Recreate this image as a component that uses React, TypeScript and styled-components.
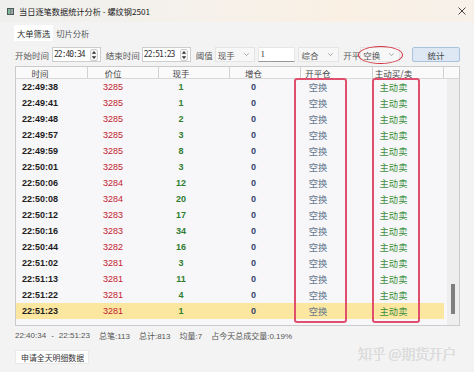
import React from "react";
import styled, { createGlobalStyle } from "styled-components";

const GlobalStyle = createGlobalStyle`
  html, body { margin: 0; padding: 0; }
  body {
    width: 474px; height: 372px; overflow: hidden; background: #f3f3f3;
    font-family: "Liberation Sans", "Noto Sans CJK SC", sans-serif;
  }
  * { box-sizing: border-box; }
`;

const CJK = `"Noto Sans CJK SC", sans-serif`;
const MIXED = `"Liberation Sans", "Noto Sans CJK SC", sans-serif`;

const Window = styled.div`
  position: relative;
  width: 474px;
  height: 372px;
  display: flex;
  flex-direction: column;
  background: #f3f3f3;
`;

const TitleBar = styled.div`
  height: 22px;
  flex: none;
  display: flex;
  align-items: center;
  padding: 0 8px 0 7px;
  background: linear-gradient(90deg, #eff0ee 0%, #f5f1eb 40%, #faf0e4 72%, #f7f1ea 100%);
`;

const TitleText = styled.span`
  margin-left: 5px;
  flex: 1;
  font-family: ${CJK};
  font-size: 8.2px;
  color: #1b1b1b;
  white-space: nowrap;
`;

const Body = styled.div`
  display: flex;
  flex-direction: column;
  padding: 0 14px 0 15px;
`;

const Tabs = styled.div`
  display: flex;
  margin-top: 3px;
  margin-left: -1px;
  height: 16px;
`;

const Tab = styled.div<{ $active?: boolean }>`
  padding: 0 3px;
  line-height: 16px;
  font-family: ${CJK};
  font-size: 8.3px;
  color: ${(p) => (p.$active ? "#2a2a2a" : "#555")};
  background: ${(p) => (p.$active ? "#ffffff" : "transparent")};
`;

const Toolbar = styled.div`
  display: flex;
  align-items: center;
  height: 15px;
  margin-top: 6px;
`;

const Label = styled.span<{ $ml?: number }>`
  margin-left: ${(p) => p.$ml ?? 0}px;
  font-family: ${CJK};
  font-size: 8.5px;
  color: #5a5a5a;
  white-space: nowrap;
`;

const TimeBox = styled.div<{ $ml: number }>`
  margin-left: ${(p) => p.$ml}px;
  width: 49px;
  height: 15px;
  border: 1px solid #cdcdcd;
  background: #fff;
  display: flex;
  align-items: center;
  padding-left: 1px;
`;

const TimeText = styled.span`
  flex: 1;
  font-family: "DejaVu Sans Mono", monospace;
  font-size: 8px;
  letter-spacing: -1px;
  color: #333;
`;

const SelectBox = styled.div<{ $ml: number; $w: number }>`
  position: relative;
  margin-left: ${(p) => p.$ml}px;
  width: ${(p) => p.$w}px;
  height: 15px;
  background: #f7f7f7;
  border: 1px solid #e4e4e4;
  display: flex;
  align-items: center;
  justify-content: space-between;
  padding: 0 5px 0 2px;
  font-family: ${CJK};
  font-size: 8.5px;
  color: #555;
`;

const TextInput = styled.div<{ $ml: number }>`
  margin-left: ${(p) => p.$ml}px;
  width: 38px;
  height: 15px;
  background: #fff;
  border: 1px solid #e6e6e6;
  border-bottom: 1px solid #9a9a9a;
  padding-left: 2px;
  font-family: "Liberation Serif", serif;
  font-size: 9px;
  line-height: 13px;
  color: #444;
`;

const Button = styled.div<{ $ml: number }>`
  margin-left: ${(p) => p.$ml}px;
  width: 48px;
  height: 15px;
  background: #dde8f4;
  border: 1px solid #a9c2dd;
  border-radius: 2px;
  display: flex;
  align-items: center;
  justify-content: center;
  font-family: ${CJK};
  font-size: 8.5px;
  color: #444;
`;

const Ellipse = styled.div`
  position: absolute;
  left: -3px;
  top: -2px;
  width: 45px;
  height: 18px;
  border: 1.5px solid #d4303e;
  border-radius: 50%;
  pointer-events: none;
`;

const Table = styled.div`
  position: relative;
  margin-top: 4px;
  width: 445px;
  height: 260px;
  border: 1px solid #cbcbcb;
  background: #f7f7f9;
  display: flex;
  flex-direction: column;
`;

const HeaderRow = styled.div`
  display: flex;
  height: 12px;
  border-bottom: 1px solid #d9d9d9;
  background: #fafafa;
`;

const HeaderCell = styled.div<{ $w: number }>`
  width: ${(p) => p.$w}px;
  flex: none;
  border-right: 1px solid #d2d2d2;
  display: flex;
  align-items: center;
  font-family: ${CJK};
  font-size: 8.5px;
  color: #444;
`;

const BodyArea = styled.div`
  flex: 1;
  display: flex;
`;

const Rows = styled.div`
  width: 428px;
  display: flex;
  flex-direction: column;
`;

const Row = styled.div<{ $sel?: boolean }>`
  display: flex;
  height: 16px;
  background: ${(p) => (p.$sel ? "#fce7a1" : "transparent")};
`;

const Cell = styled.div<{ $w: number }>`
  width: ${(p) => p.$w}px;
  flex: none;
  display: flex;
  align-items: center;
`;

type Kind = "time" | "price" | "vol" | "oi" | "open" | "side" | "head";

const kindStyle: Record<Kind, string> = {
  time: `font-family: ${MIXED}; font-size: 9px; font-weight: 700; color: #1c1c1c;`,
  price: `font-family: ${MIXED}; font-size: 9px; font-weight: 400; color: #c4202f;`,
  vol: `font-family: ${MIXED}; font-size: 9px; font-weight: 700; color: #2f7d2f;`,
  oi: `font-family: ${MIXED}; font-size: 9px; font-weight: 700; color: #34456a;`,
  open: `font-family: ${CJK}; font-size: 9.3px; color: #65768f;`,
  side: `font-family: ${CJK}; font-size: 9.3px; color: #3e8f3e;`,
  head: ``,
};

const CellText = styled.span<{ $c: number; $k: Kind }>`
  width: ${(p) => p.$c * 2}px;
  display: flex;
  justify-content: center;
  white-space: nowrap;
  ${(p) => kindStyle[p.$k]}
`;

const ScrollTrack = styled.div`
  width: 15px;
  display: flex;
  flex-direction: column;
  justify-content: flex-end;
  align-items: center;
  padding: 0 0 11px 2px;
  background: linear-gradient(90deg, #f7f7f9 0 3px, #eeeeef 3px);
`;

const ScrollThumb = styled.div`
  width: 4px;
  height: 30px;
  background: #7f7f7f;
`;

const Annotation = styled.div<{ $left: number; $width: number }>`
  position: absolute;
  left: ${(p) => p.$left}px;
  top: 11px;
  width: ${(p) => p.$width}px;
  height: 245px;
  border: 2px solid #e04f6d;
  border-radius: 3px;
  pointer-events: none;
`;

const StatusLine = styled.div`
  display: flex;
  gap: 9px;
  margin-top: 4px;
  height: 10px;
  align-items: center;
  font-family: ${MIXED};
  font-size: 8px;
  color: #555;
  white-space: pre;
`;

const StatusGroup = styled.span`
  display: flex;
  gap: 5px;
`;

const Footer = styled.div`
  display: flex;
  margin-top: 10px;
`;

const PlainButton = styled.div`
  height: 14px;
  padding: 0 4px 0 5px;
  background: #fff;
  border: 1px solid #e9e9e9;
  display: flex;
  align-items: center;
  font-family: ${CJK};
  font-size: 7.9px;
  color: #333;
`;

const Watermark = styled.div`
  position: absolute;
  left: 358px;
  top: 343px;
  font-family: ${CJK};
  font-size: 14px;
  color: #dcdcdc;
  text-shadow: 0 0 1px #ffffff, 0 0 0.5px #a0a0a0;
  white-space: nowrap;
  letter-spacing: -0.3px;
`;

const COLS = [72, 71, 71, 71, 72, 71];
const CENTERS = [24, 25, 22, 23.5, 17, 20.5];
const HEAD = ["时间", "价位", "现手", "增仓", "开平仓", "主动买/卖"];
const KINDS: Kind[] = ["time", "price", "vol", "oi", "open", "side"];

const DATA: [string, string, string][] = [
  ["22:49:38", "3285", "1"],
  ["22:49:41", "3285", "1"],
  ["22:49:48", "3285", "2"],
  ["22:49:57", "3285", "3"],
  ["22:49:59", "3285", "8"],
  ["22:50:01", "3285", "3"],
  ["22:50:06", "3284", "12"],
  ["22:50:08", "3284", "20"],
  ["22:50:12", "3283", "17"],
  ["22:50:16", "3283", "34"],
  ["22:50:44", "3282", "16"],
  ["22:51:02", "3281", "3"],
  ["22:51:13", "3281", "11"],
  ["22:51:22", "3281", "4"],
  ["22:51:23", "3281", "1"],
];

const AppIcon = () => (
  <svg width="7" height="7" viewBox="0 0 7 7">
    <rect x="0" y="0" width="7" height="7" fill="#4d5a5a" />
    <rect x="1" y="1" width="2" height="5" fill="#7fb89a" />
    <rect x="3.5" y="1" width="2.5" height="5" fill="#9aa4a4" />
  </svg>
);

const CloseIcon = () => (
  <svg width="8" height="8" viewBox="0 0 8 8">
    <path d="M0.5 0.5 L7.5 7.5 M7.5 0.5 L0.5 7.5" stroke="#333" strokeWidth="0.9" />
  </svg>
);

const Spinner = () => (
  <svg width="8" height="12" viewBox="0 0 8 12" style={{ marginRight: 2 }}>
    <rect x="0.5" y="0.5" width="7" height="11" rx="1.5" fill="#f4f4f4" stroke="#d0d0d0" />
    <path d="M4 2 L6.2 4.8 L1.8 4.8 Z" fill="#333" />
    <path d="M4 10 L6.2 7.2 L1.8 7.2 Z" fill="#333" />
  </svg>
);

const Chevron = () => (
  <svg width="5" height="3" viewBox="0 0 5 3">
    <path d="M0.3 0.3 L2.5 2.6 L4.7 0.3" fill="none" stroke="#888" strokeWidth="0.7" />
  </svg>
);

export default function App() {
  return (
    <>
      <GlobalStyle />
      <Window>
        <TitleBar>
          <AppIcon />
          <TitleText>当日逐笔数据统计分析 - 螺纹钢2501</TitleText>
          <CloseIcon />
        </TitleBar>
        <Body>
          <Tabs>
            <Tab $active>大单筛选</Tab>
            <Tab>切片分析</Tab>
          </Tabs>
          <Toolbar>
            <Label>开始时间</Label>
            <TimeBox $ml={3}>
              <TimeText>22:40:34</TimeText>
              <Spinner />
            </TimeBox>
            <Label $ml={5}>结束时间</Label>
            <TimeBox $ml={2}>
              <TimeText>22:51:23</TimeText>
              <Spinner />
            </TimeBox>
            <Label $ml={5}>阈值</Label>
            <SelectBox $ml={2} $w={40}>
              <span>现手</span>
              <Chevron />
            </SelectBox>
            <TextInput $ml={3}>1</TextInput>
            <SelectBox $ml={3} $w={41}>
              <span>综合</span>
              <Chevron />
            </SelectBox>
            <Label $ml={4}>开平</Label>
            <SelectBox $ml={0} $w={40}>
              <span>空换</span>
              <Chevron />
              <Ellipse />
            </SelectBox>
            <Button $ml={12}>统计</Button>
          </Toolbar>
          <Table>
            <HeaderRow>
              {HEAD.map((h, i) => (
                <HeaderCell key={h} $w={COLS[i]}>
                  <CellText $c={CENTERS[i]} $k="head">
                    {h}
                  </CellText>
                </HeaderCell>
              ))}
            </HeaderRow>
            <BodyArea>
              <Rows>
                {DATA.map((r, idx) => {
                  const vals = [r[0], r[1], r[2], "0", "空换", "主动卖"];
                  return (
                    <Row key={idx} $sel={idx === DATA.length - 1}>
                      {vals.map((v, i) => (
                        <Cell key={i} $w={COLS[i]}>
                          <CellText $c={CENTERS[i]} $k={KINDS[i]}>
                            {v}
                          </CellText>
                        </Cell>
                      ))}
                    </Row>
                  );
                })}
              </Rows>
              <ScrollTrack>
                <ScrollThumb />
              </ScrollTrack>
            </BodyArea>
            <Annotation $left={278} $width={53} />
            <Annotation $left={356} $width={48} />
          </Table>
          <StatusLine>
            <StatusGroup>
              <span>22:40:34</span>
              <span>-</span>
              <span>22:51:23</span>
            </StatusGroup>
            <span>总笔:113</span>
            <span>总计:813</span>
            <span>均量:7</span>
            <span>占今天总成交量:0.19%</span>
          </StatusLine>
          <Footer>
            <PlainButton>申请全天明细数据</PlainButton>
          </Footer>
        </Body>
        <Watermark>知乎 @期货开户</Watermark>
      </Window>
    </>
  );
}
